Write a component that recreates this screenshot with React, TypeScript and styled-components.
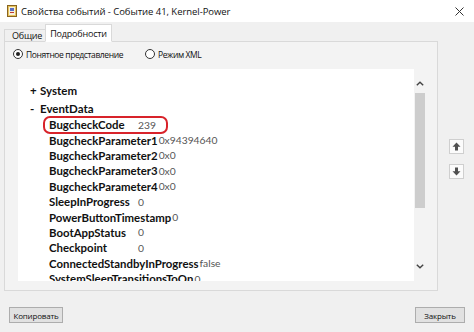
import React from 'react';
import styled, { createGlobalStyle } from 'styled-components';

const GlobalStyle = createGlobalStyle`
  html, body {
    margin: 0;
    padding: 0;
    background: #ffffff;
  }
  body {
    font-family: "Open Sans", "Noto Sans", sans-serif;
  }
`;

const Window = styled.div`
  width: 474px;
  height: 332px;
  display: flex;
  flex-direction: column;
  background: #f0f0f0;
  overflow: hidden;
`;

const TitleBar = styled.div`
  height: 22px;
  flex: none;
  display: flex;
  align-items: center;
  padding: 0 7px;
  background: #ffffff;
  color: #111;
  font-size: 9.5px;
  letter-spacing: -0.05px;
`;

const TitleText = styled.span`
  margin-left: 4px;
  flex: 1;
`;

const CloseButton = styled.div`
  width: 10px;
  height: 10px;
  margin-right: 3px;
  display: flex;
  align-items: center;
  justify-content: center;
`;

const Body = styled.div`
  flex: 1;
  display: flex;
  flex-direction: column;
`;

const MainRow = styled.div`
  display: flex;
  padding-left: 4px;
`;

const TabArea = styled.div`
  width: 434px;
  display: flex;
  flex-direction: column;
`;

const TabStrip = styled.div`
  height: 19px;
  display: flex;
  align-items: flex-end;
  position: relative;
  z-index: 1;
`;

const Tab = styled.div<{ $active?: boolean }>`
  height: ${(p) => (p.$active ? 16 : 11)}px;
  padding: 0 ${(p) => (p.$active ? 4 : 3)}px 0 ${(p) => (p.$active ? 4 : 7)}px;
  display: flex;
  align-items: center;
  font-size: 9px;
  letter-spacing: -0.2px;
  color: #111;
  background: ${(p) => (p.$active ? '#ffffff' : '#f0f0f0')};
  border: 1px solid #d9d9d9;
  border-bottom: ${(p) => (p.$active ? '1px solid #ffffff' : '1px solid #d9d9d9')};
  margin-bottom: -1px;
  margin-left: ${(p) => (p.$active ? -1 : 0)}px;
`;

const Panel = styled.div`
  height: 250px;
  box-sizing: border-box;
  border: 1px solid #d9d9d9;
  background: #f3f3f3;
  padding: 4px 10px 0 8px;
  display: flex;
  flex-direction: column;
`;

const RadioRow = styled.div`
  height: 16px;
  display: flex;
  align-items: center;
`;

const RadioLabel = styled.label<{ $width?: number }>`
  display: flex;
  align-items: center;
  width: ${(p) => p.$width ?? 0}px;
  font-size: 8.5px;
  letter-spacing: -0.4px;
  color: #111;
`;

const RadioDot = styled.span<{ $checked?: boolean }>`
  width: 8px;
  height: 8px;
  flex: none;
  border-radius: 50%;
  border: 1px solid #333;
  background: #fff;
  display: inline-flex;
  align-items: center;
  justify-content: center;
  margin-right: 3px;
  &::after {
    content: '';
    width: 4px;
    height: 4px;
    border-radius: 50%;
    background: ${(p) => (p.$checked ? '#222' : 'transparent')};
  }
`;

const ViewerRow = styled.div`
  margin: 7px 0 0 5px;
  height: 212px;
  display: flex;
`;

const Viewer = styled.div`
  width: 396px;
  background: #ffffff;
  padding-top: 12px;
  box-sizing: border-box;
  overflow: hidden;
  position: relative;
`;

const Scrollbar = styled.div`
  width: 12px;
  padding-top: 8px;
  display: flex;
  flex-direction: column;
  align-items: center;
`;

const ScrollArrow = styled.div`
  height: 12px;
  width: 12px;
  display: flex;
  align-items: center;
  justify-content: center;
`;

const Thumb = styled.div`
  width: 10px;
  height: 115px;
  background: #cdcdcd;
  margin-top: 4px;
`;

const Spacer = styled.div<{ $height?: number }>`
  flex: ${(p) => (p.$height ? 'none' : 1)};
  height: ${(p) => p.$height ?? 0}px;
`;

const GroupRow = styled.div`
  height: 18px;
  display: flex;
  align-items: center;
  padding-left: 12px;
  font-family: Lato, "Open Sans", sans-serif;
  font-weight: 700;
  font-size: 11.5px;
  color: #111;
`;

const Sign = styled.span`
  width: 10px;
`;

const DataRow = styled.div`
  height: 15.4px;
  display: flex;
  align-items: center;
  padding-left: 31px;
`;

const DataName = styled.span`
  min-width: 88px;
  padding-right: 1px;
  font-family: Lato, "Open Sans", sans-serif;
  font-weight: 700;
  font-size: 11.4px;
  color: #111;
  white-space: nowrap;
`;

const DataValue = styled.span`
  font-family: Lato, "Open Sans", sans-serif;
  font-size: 10.3px;
  color: #555;
  white-space: nowrap;
`;

const Highlight = styled.div`
  position: absolute;
  left: 25px;
  top: 47px;
  width: 121px;
  height: 14px;
  border: 2px solid #d8232a;
  border-radius: 7px;
`;

const SideButtons = styled.div`
  margin-left: 11px;
  margin-top: 117px;
  display: flex;
  flex-direction: column;
  gap: 10px;
`;

const SquareButton = styled.div`
  width: 13px;
  height: 13px;
  border: 1px solid #cfcfcf;
  background: #fbfbfb;
  display: flex;
  align-items: center;
  justify-content: center;
`;

const Footer = styled.div`
  margin-top: 16px;
  padding: 0 9px;
  display: flex;
  justify-content: space-between;
`;

const Button = styled.div<{ $width: number }>`
  width: ${(p) => p.$width}px;
  height: 16px;
  box-sizing: border-box;
  border: 1px solid #adadad;
  background: #e1e1e1;
  display: flex;
  align-items: center;
  justify-content: center;
  font-size: 8px;
  letter-spacing: -0.2px;
  color: #111;
`;

const rows: [string, string][] = [
  ['BugcheckCode', '239'],
  ['BugcheckParameter1', '0x94394640'],
  ['BugcheckParameter2', '0x0'],
  ['BugcheckParameter3', '0x0'],
  ['BugcheckParameter4', '0x0'],
  ['SleepInProgress', '0'],
  ['PowerButtonTimestamp', '0'],
  ['BootAppStatus', '0'],
  ['Checkpoint', '0'],
  ['ConnectedStandbyInProgress', 'false'],
  ['SystemSleepTransitionsToOn', '0'],
];

const AppIcon = () => (
  <svg width="10" height="12" viewBox="0 0 10 12">
    <rect x="0.5" y="0.5" width="9" height="11" fill="#e6c35c" stroke="#8a6420" />
    <rect x="2" y="2" width="6" height="8" fill="#f7f1dc" />
    <rect x="3" y="3" width="4" height="3" fill="#5b6fc4" />
    <rect x="3" y="7" width="4" height="1" fill="#c0392b" />
  </svg>
);

const App = () => (
  <>
    <GlobalStyle />
    <Window>
      <TitleBar>
        <AppIcon />
        <TitleText>Свойства событий - Событие 41, Kernel-Power</TitleText>
        <CloseButton>
          <svg width="9" height="9" viewBox="0 0 9 9">
            <path d="M0.5 0.5 L8.5 8.5 M8.5 0.5 L0.5 8.5" stroke="#333" strokeWidth="1" />
          </svg>
        </CloseButton>
      </TitleBar>
      <Body>
        <MainRow>
          <TabArea>
            <TabStrip>
              <Tab>Общие</Tab>
              <Tab $active>Подробности</Tab>
            </TabStrip>
            <Panel>
              <RadioRow>
                <RadioLabel $width={132}>
                  <RadioDot $checked />
                  Понятное представление
                </RadioLabel>
                <RadioLabel $width={100}>
                  <RadioDot />
                  Режим XML
                </RadioLabel>
              </RadioRow>
              <ViewerRow>
                <Viewer>
                  <GroupRow>
                    <Sign>+</Sign>System
                  </GroupRow>
                  <GroupRow>
                    <Sign>-</Sign>EventData
                  </GroupRow>
                  {rows.map(([name, value]) => (
                    <DataRow key={name}>
                      <DataName>{name}</DataName>
                      <DataValue>{value}</DataValue>
                    </DataRow>
                  ))}
                  <Highlight />
                </Viewer>
                <Scrollbar>
                  <ScrollArrow>
                    <svg width="8" height="5" viewBox="0 0 8 5">
                      <path d="M0.8 4.3 L4 1.2 L7.2 4.3" fill="none" stroke="#444" strokeWidth="1.4" />
                    </svg>
                  </ScrollArrow>
                  <Thumb />
                  <Spacer />
                  <ScrollArrow>
                    <svg width="8" height="5" viewBox="0 0 8 5">
                      <path d="M0.8 0.7 L4 3.8 L7.2 0.7" fill="none" stroke="#444" strokeWidth="1.4" />
                    </svg>
                  </ScrollArrow>
                  <Spacer $height={9} />
                </Scrollbar>
              </ViewerRow>
            </Panel>
          </TabArea>
          <SideButtons>
            <SquareButton>
              <svg width="9" height="9" viewBox="0 0 9 9">
                <path d="M4.5 0.5 L8.5 4.8 L6 4.8 L6 8.5 L3 8.5 L3 4.8 L0.5 4.8 Z" fill="#505050" />
              </svg>
            </SquareButton>
            <SquareButton>
              <svg width="9" height="9" viewBox="0 0 9 9">
                <path d="M4.5 8.5 L8.5 4.2 L6 4.2 L6 0.5 L3 0.5 L3 4.2 L0.5 4.2 Z" fill="#505050" />
              </svg>
            </SquareButton>
          </SideButtons>
        </MainRow>
        <Footer>
          <Button $width={54}>Копировать</Button>
          <Button $width={50}>Закрыть</Button>
        </Footer>
      </Body>
    </Window>
  </>
);

export default App;
